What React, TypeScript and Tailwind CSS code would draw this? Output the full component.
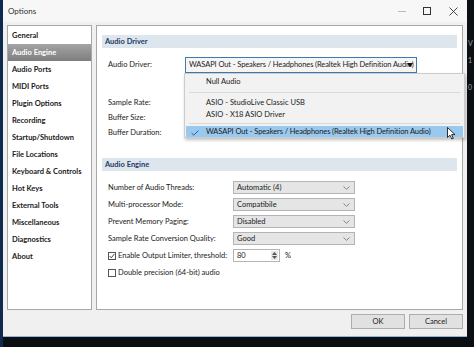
import React from "react";

const Chevron = () => (
  <svg width="7" height="4" viewBox="0 0 7 4" className="shrink-0">
    <path d="M0.5 0.5 L3.5 3.3 L6.5 0.5" fill="none" stroke="#7a7a7a" strokeWidth="0.9" />
  </svg>
);

const Select = ({ value }: { value: string }) => (
  <div className="w-[122px] h-[13px] bg-[#e5e5e5] border border-[#b4b4b4] flex items-center justify-between pl-[3px] pr-[4px]">
    <span>{value}</span>
    <Chevron />
  </div>
);

const Check = ({ checked }: { checked?: boolean }) => (
  <div className="w-[8px] h-[8px] border border-[#555] bg-white flex items-center justify-center shrink-0">
    {checked && (
      <svg width="6" height="6" viewBox="0 0 6 6">
        <path d="M0.6 3 L2.3 4.8 L5.4 0.9" fill="none" stroke="#333" strokeWidth="0.9" />
      </svg>
    )}
  </div>
);

const SectionHeader = ({ title }: { title: string }) => (
  <div className="h-[13px] bg-[#dde5ed] flex items-center pl-[3px] font-bold text-[#1f3a66]">{title}</div>
);

const navItems = [
  "General",
  "Audio Engine",
  "Audio Ports",
  "MIDI Ports",
  "Plugin Options",
  "Recording",
  "Startup/Shutdown",
  "File Locations",
  "Keyboard & Controls",
  "Hot Keys",
  "External Tools",
  "Miscellaneous",
  "Diagnostics",
  "About",
];

export default function App() {
  return (
    <div
      className="relative w-[474px] h-[347px] bg-[#0b0f14] overflow-hidden text-[7.5px] text-[#1a1a1a] leading-none whitespace-nowrap"
      style={{ fontFamily: 'Lato, "Noto Sans", sans-serif' }}
    >
      {/* left desktop strip */}
      <div className="absolute left-0 top-0 w-[3px] h-full bg-[#0e2a4f]" />
      {/* right desktop text */}
      <div className="absolute left-[468px] top-[40px] text-[#9aa2ab] text-[7px] flex flex-col gap-[10px]">
        <span>V</span>
        <span>1</span>
        <span className="mt-[10px]">0</span>
      </div>

      {/* window */}
      <div className="absolute left-[3px] top-0 w-[464px] h-[337px] bg-[#f0f0f0] border-b border-[#8fb6d6] flex flex-col">
        {/* title bar */}
        <div className="h-[22px] bg-[#f7f7f7] flex items-center pl-[5px] shrink-0">
          <span className="text-[8px] text-[#333]">Options</span>
          <div className="ml-auto flex items-center h-full">
            <div className="w-[25px] flex justify-center">
              <div className="w-[8px] h-px bg-[#bbb]" />
            </div>
            <div className="w-[25px] flex justify-center">
              <div className="w-[8px] h-[8px] border border-[#333]" />
            </div>
            <div className="w-[28px] flex justify-center">
              <svg width="9" height="9" viewBox="0 0 9 9">
                <path d="M0.5 0.5 L8.5 8.5 M8.5 0.5 L0.5 8.5" stroke="#333" strokeWidth="0.9" />
              </svg>
            </div>
          </div>
        </div>

        {/* body */}
        <div className="flex gap-[4px] pl-[4px] pt-[3px] h-[288px] shrink-0">
          {/* sidebar */}
          <div className="w-[85px] h-full bg-white border border-[#a8a8a8] pt-[1px] flex flex-col">
            {navItems.map((n, i) => (
              <div
                key={n}
                className={
                  "h-[17px] flex items-center pl-[4px] font-bold shrink-0 text-[7.5px] " +
                  (i === 1
                    ? "bg-gradient-to-b from-[#a4a4a4] to-[#7e7e7e] text-white"
                    : "text-[#1a1a1a]")
                }
              >
                {n}
              </div>
            ))}
          </div>

          {/* content */}
          <div className="w-[367px] h-full bg-white border border-[#a8a8a8] pt-[9px] px-[5px] flex flex-col">
            <SectionHeader title="Audio Driver" />
            <div className="pl-[6px] flex flex-col">
              <div className="h-[16px] mt-[9px] flex items-center">
                <span className="w-[77px]">Audio Driver:</span>
                <div className="w-[232px] h-[16px] bg-[#f5f5f5] border border-[#3d7ab3] flex items-center pl-[3px] relative overflow-hidden">
                  <span className="tracking-[-0.1px]">WASAPI Out - Speakers / Headphones (Realtek High Definition Audio)</span>
                  <svg width="6" height="5" viewBox="0 0 6 5" className="absolute right-[3px] top-[5px]">
                    <path d="M0 0 L6 0 L3 4 Z" fill="#111" />
                  </svg>
                </div>
              </div>
              <div className="h-[15px] mt-[22px] flex items-center">Sample Rate:</div>
              <div className="h-[15px] flex items-center">Buffer Size:</div>
              <div className="h-[15px] flex items-center">Buffer Duration:</div>
            </div>

            <div className="mt-[18px]">
              <SectionHeader title="Audio Engine" />
            </div>
            <div className="pl-[6px] flex flex-col gap-[4px] mt-[10px]">
              {[
                ["Number of Audio Threads:", "Automatic (4)"],
                ["Multi-processor Mode:", "Compatibile"],
                ["Prevent Memory Paging:", "Disabled"],
                ["Sample Rate Conversion Quality:", "Good"],
              ].map(([l, v]) => (
                <div key={l} className="flex items-center h-[13px]">
                  <span className="w-[125px]">{l}</span>
                  <Select value={v} />
                </div>
              ))}
              <div className="flex items-center h-[13px]">
                <div className="w-[125px] flex items-center gap-[2px]">
                  <Check checked />
                  <span>Enable Output Limiter, threshold:</span>
                </div>
                <div className="w-[47px] h-[13px] bg-white border border-[#b4b4b4] flex items-center pl-[3px] relative">
                  <span>80</span>
                  <div className="absolute right-[1px] top-[1px] w-[7px] h-[9px] bg-[#e6e6e6] flex flex-col items-center justify-around">
                    <svg width="5" height="3" viewBox="0 0 5 3"><path d="M0 3 L2.5 0 L5 3Z" fill="#555" /></svg>
                    <svg width="5" height="3" viewBox="0 0 5 3"><path d="M0 0 L2.5 3 L5 0Z" fill="#555" /></svg>
                  </div>
                </div>
                <span className="ml-[5px]">%</span>
              </div>
              <div className="flex items-center h-[13px] gap-[2px]">
                <Check />
                <span>Double precision (64-bit) audio</span>
              </div>
            </div>
          </div>
        </div>

        {/* buttons */}
        <div className="flex justify-end gap-[4px] pr-[4px] mt-[4px]">
          <div className="w-[54px] h-[15px] bg-[#e1e1e1] border border-[#adadad] flex items-center justify-center">OK</div>
          <div className="w-[54px] h-[15px] bg-[#e1e1e1] border border-[#adadad] flex items-center justify-center">Cancel</div>
        </div>
      </div>

      {/* dropdown overlay */}
      <div className="absolute left-[184px] top-[73px] w-[281px] h-[65px] bg-[#f2f2f2] border border-[#cccccc] shadow-[1px_2px_3px_rgba(0,0,0,0.25)] flex flex-col pt-[2px]">
        <div className="h-[14px] flex items-center pl-[21px]">Null Audio</div>
        <div className="h-[1px] bg-[#d9d9d9] mx-[4px] my-[4px]" />
        <div className="h-[14px] flex items-center pl-[21px]">ASIO - StudioLive Classic USB</div>
        <div className="h-[14px] flex items-center pl-[21px]">ASIO - X18 ASIO Driver</div>
        <div className="h-[1px] bg-[#d9d9d9] mx-[4px] my-[2px]" />
        <div className="h-[13px] flex items-center bg-[#99c9ef] mx-[1px] relative">
          <svg width="8" height="6" viewBox="0 0 8 6" className="absolute left-[5px] top-[4px]">
            <path d="M0.6 3 L2.8 5.2 L7.4 0.6" fill="none" stroke="#1e63b5" strokeWidth="1" />
          </svg>
          <span className="pl-[20px] tracking-[-0.1px]">WASAPI Out - Speakers / Headphones (Realtek High Definition Audio)</span>
        </div>
      </div>

      {/* mouse cursor */}
      <svg width="9" height="13" viewBox="0 0 9 13" className="absolute left-[447px] top-[127px]">
        <path d="M0.5 0.5 L0.5 10.5 L3 8.2 L4.8 12 L6.3 11.3 L4.6 7.6 L8 7.6 Z" fill="#fff" stroke="#000" strokeWidth="0.8" />
      </svg>
    </div>
  );
}
